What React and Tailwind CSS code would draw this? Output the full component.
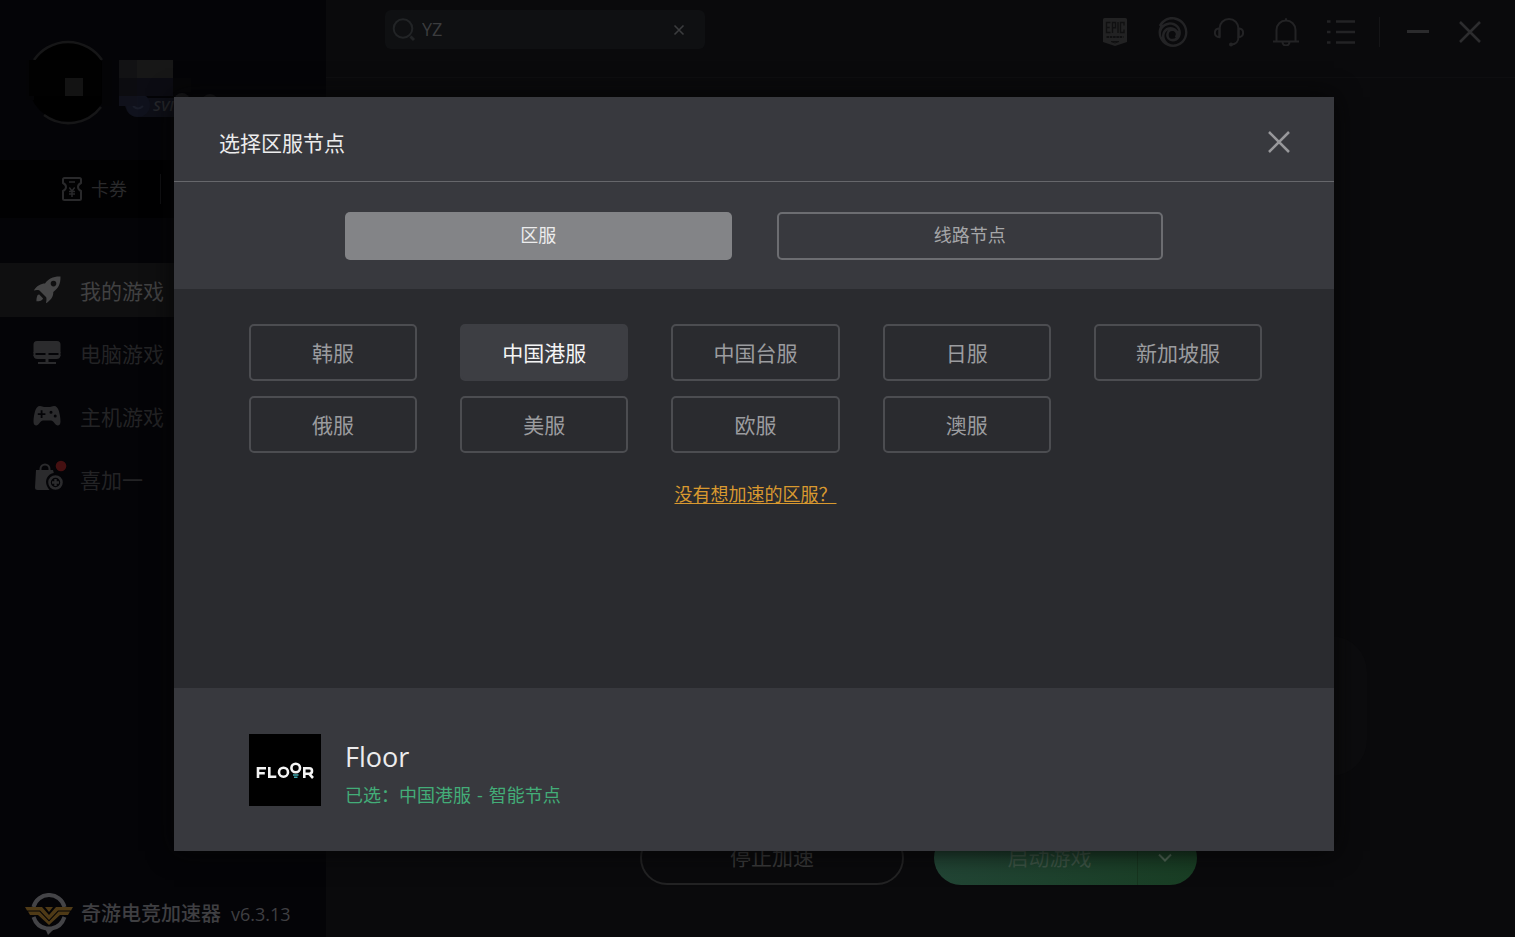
import React, { useState } from "react";
import { SiUbisoft } from "react-icons/si";

const regions = ["韩服", "中国港服", "中国台服", "日服", "新加坡服", "俄服", "美服", "欧服", "澳服"];

function RocketIcon() {
  return (
    <svg viewBox="0 0 28 28" className="h-7 w-7" fill="currentColor" aria-hidden="true">
      <path fillRule="evenodd" d="M27.5.5C20 .3 15.500 2.500 12 7.500 8 7.500 4 9.500.8 14.600c2-.6 4-.7 5.700-.1l6.700 6.700c.5 1.800.3 3.700-.3 6 5.200-3 7.500-7 7.400-11.300C25.300 12.500 27.700 8 27.500.5ZM20.500 4.800a2.800 2.800 0 1 1 0 5.600 2.800 2.800 0 0 1 0-5.600Z" />
      <path d="M6 18.300c-2 .8-2.700 3.700-2.600 7 3.300 0 6-.8 6.700-2.800Z" />
    </svg>
  );
}

function MonitorIcon() {
  return (
    <svg viewBox="0 0 28 24" className="h-6 w-7" fill="currentColor" aria-hidden="true">
      <path d="M4 0h20a3.500 3.500 0 0 1 3.500 3.500V12H.5V3.500A3.500 3.500 0 0 1 4 0ZM.5 14h27a4 4 0 0 1-4 4h-8v3H23v2H5v-2h7.500v-3h-8a4 4 0 0 1-4-4Z" />
      <path d="M.5 11h2v4h-2zM25.500 11h2v4h-2zM12.500 11h3v4h-3z" />
    </svg>
  );
}

function GamepadIcon() {
  return (
    <svg viewBox="0 0 28 20" className="h-5 w-7" fill="currentColor" aria-hidden="true">
      <path fillRule="evenodd" d="M7 0c1.800 0 2.800 1 4 1h6c1.200 0 2.200-1 4-1 2.500 0 4 2 4.900 5 .9 3.200 1.600 7 1.600 10.500 0 2.500-1 4-2.700 4-2.500 0-4.300-5-6.800-5h-8c-2.500 0-4.300 5-6.800 5-1.700 0-2.700-1.500-2.700-4C.5 12 1.200 8.200 2.100 5 3 2 4.500 0 7 0Zm.7 4.200v3H4.800v1.800h2.900v3h1.800v-3h2.900V7.200H9.500v-3ZM18 4.800a1.500 1.500 0 1 0 0 3 1.500 1.500 0 0 0 0-3Zm4.200 3.700a1.500 1.500 0 1 0 0 3 1.500 1.500 0 0 0 0-3Z" />
    </svg>
  );
}

function BagIcon() {
  return (
    <svg viewBox="0 0 34 38" className="h-[38px] w-[34px]" aria-hidden="true">
      <path fill="currentColor" d="M3 10h3.500V9a5.500 5.500 0 0 1 11 0v1H20l.8 3A9 9 0 0 0 14 26l1 2 1.500 2H4.500A2.500 2.500 0 0 1 2 27.500Zm5.500 0h7V9a3.500 3.500 0 0 0-7 0Z" />
      <circle cx="22.500" cy="22.500" r="6" fill="none" stroke="currentColor" strokeWidth="2.600" />
      <path d="M22.500 19v7M19 22.500h7" stroke="currentColor" strokeWidth="2.400" />
      <circle cx="28" cy="6" r="5.300" fill="#451011" />
    </svg>
  );
}

function SearchIcon() {
  return (
    <svg viewBox="0 0 24 24" className="h-6 w-6" fill="none" stroke="#222426" strokeWidth="2" aria-hidden="true">
      <circle cx="11" cy="10.500" r="9.300" />
      <path d="m18.500 18.500 3.500 3.500" strokeWidth="3" />
    </svg>
  );
}

function EpicIcon() {
  return (
    <svg viewBox="0 0 24 28" className="h-7 w-6" aria-hidden="true">
      <path fill="#222223" d="M1.500 0h21A1.500 1.500 0 0 1 24 1.500V24l-12 4L0 24V1.500A1.500 1.500 0 0 1 1.500 0Z" />
      <g stroke="#101011" fill="none" strokeWidth="1.400">
        <path d="M7.500 4.500h-4v10h4M3.500 9.500h3.200M9.500 15V4.500h3v5.200h-3M15 4v11M21 7.500v-3h-3.500v10H21v-3" />
        <path d="M3.500 19h17" strokeDasharray="2.500 .8" strokeWidth="2" />
        <path d="M8 23.500h8l-4 1.500Z" strokeWidth="1" />
      </g>
    </svg>
  );
}

function HeadsetIcon() {
  return (
    <svg viewBox="0 0 30 30" className="h-[30px] w-[30px]" fill="none" stroke="currentColor" strokeWidth="2" aria-hidden="true">
      <path d="M5.500 20V11.500a9.500 9.500 0 0 1 19 0V20c0 4-2.500 7.500-7.500 7.500" />
      <path d="M5.500 11.500C2.500 11.500.9 13.500.9 15.800s1.600 4.400 4.600 4.400ZM24.500 11.500c3 0 4.600 2 4.600 4.300s-1.600 4.400-4.600 4.400Z" />
      <circle cx="17" cy="27.500" r="1" fill="currentColor" />
    </svg>
  );
}

function BellIcon() {
  return (
    <svg viewBox="0 0 28 28" className="h-7 w-7" fill="none" stroke="currentColor" strokeWidth="2" aria-hidden="true">
      <path d="M1 23.500h26M4.500 23V12a9.500 9.500 0 0 1 19 0v11M14 2.500V.3M10.500 24a3.500 3.500 0 0 0 7 0" />
    </svg>
  );
}

function ListIcon() {
  return (
    <svg viewBox="0 0 28 26" className="h-[26px] w-7" stroke="currentColor" strokeWidth="2.400" aria-hidden="true">
      <path d="M0 2.500h3.500M9 2.500h19M0 13h3.500M9 13h19M0 23.500h3.500M9 23.500h19" />
    </svg>
  );
}

function CouponIcon() {
  return (
    <svg viewBox="0 0 20 24" className="h-6 w-5" fill="none" stroke="currentColor" strokeWidth="2" aria-hidden="true">
      <path d="M2.500 1h15a1.500 1.500 0 0 1 1.500 1.500V6c-2 1-3 2.500-3 4s1 3 3 4v7.500a1.500 1.500 0 0 1-1.500 1.500h-15A1.500 1.500 0 0 1 1 21.500V14c2-1 3-2.500 3-4S3 7 1 6V2.500A1.500 1.500 0 0 1 2.500 1Z" />
      <path d="M7 5h6M7.300 10.500l2.700 3.500 2.700-3.500M10 13.500V20M7 14.500h6M7 17h6" strokeWidth="1.500" />
    </svg>
  );
}

function ProfileArt() {
  return (
    <svg viewBox="0 0 230 90" className="h-[90px] w-[230px]" aria-hidden="true">
      <circle cx="42" cy="44" r="40" fill="#000" />
      <path d="M8 22A41 41 0 0 1 76 22M18 77A41 41 0 0 0 75 69" fill="none" stroke="#161617" strokeWidth="2.500" />
      <path d="M0 22h8v40H0zM76 22h10v46H76z" fill="#040406" />
      <path d="M3 22h72v36H3Z" fill="#010101" />
      <rect x="39" y="40" width="18" height="18" fill="#131313" />
      <path d="M101 60h90v19h-80q-9 0-12-11Z" fill="#0e0f17" />
      <circle cx="112" cy="67" r="12" fill="#10121d" />
      <path d="M107 68q5 5 10 0" stroke="#1a1d29" strokeWidth="2" fill="none" />
      <circle cx="156" cy="63" r="8" fill="#161618" />
      <circle cx="184" cy="65" r="9" fill="#161618" />
      <text x="127" y="73" fontSize="15" fontStyle="italic" fontWeight="600" fontFamily="Open Sans, sans-serif" fill="#26272b">SVIP</text>
      <rect x="93" y="22" width="18" height="18" fill="#121214" />
      <rect x="111" y="22" width="36" height="18" fill="#171717" />
      <rect x="93" y="40" width="18" height="18" fill="#0c0c10" />
      <rect x="111" y="40" width="36" height="18" fill="#0c0c13" />
      <rect x="147" y="40" width="18" height="14" fill="#060608" />
      <rect x="93" y="58" width="18" height="10" fill="#10111b" />
    </svg>
  );
}

function BrandMark() {
  return (
    <svg viewBox="0 0 48 42" className="h-[42px] w-12" aria-hidden="true">
      <g fill="none" stroke="#444447" strokeWidth="4">
        <path d="M8.500 14a16 16 0 0 1 31 0M8.500 24c2 6 6 10.500 13 11.500h5c7-1 11-5.500 13-11.500" />
      </g>
      <path d="M20 35h10l-7 7Z" fill="#444447" />
      <path fill="#4f3a16" d="M0 14h17l7 8 7-8h17l-2 3.500H33L24 27l-9-9.500H2ZM3 18.500h11.500L24 28.500l9.500-10H45L43 22h-8l-11 10-11-10H5ZM20 14h8l-4 5Z" />
    </svg>
  );
}

function FloorCover() {
  return (
    <svg viewBox="0 0 72 72" className="h-[72px] w-[72px] bg-black" role="img" aria-label="Floor">
      <g fill="none" stroke="#f4f4f4" strokeWidth="2.600">
        <path d="M9 44V34.300h8M9 39.300h6.800M20.300 33v9.700h7" />
        <circle cx="34.500" cy="38.200" r="4.500" />
        <circle cx="46.700" cy="34" r="4.300" />
        <path d="M55.300 44v-9.700h5a2.600 2.600 0 0 1 0 5.400h-5M60 39.700l4 4.300" />
      </g>
      <path d="M44 41h5.500M45 43.300h3.500" stroke="#3fa6ad" strokeWidth="1.500" />
    </svg>
  );
}

const navItems = [
  { label: "我的游戏", icon: <RocketIcon />, active: true },
  { label: "电脑游戏", icon: <MonitorIcon /> },
  { label: "主机游戏", icon: <GamepadIcon /> },
  { label: "喜加一", icon: <BagIcon /> },
];

function Sidebar() {
  return (
    <aside className="flex w-[326px] shrink-0 flex-col bg-[#040407]">
      <div className="h-40 pl-[26px] pt-[38px]">
        <ProfileArt />
      </div>
      <div className="flex h-[58px] items-center bg-[#010102] pl-[62px] text-[#29292b]">
        <a href="#coupon" className="flex items-center gap-[9px] text-[18px] leading-6">
          <CouponIcon />
          卡券
        </a>
        <span className="ml-[33px] h-[30px] w-px bg-[#111113]" />
      </div>
      <nav className="mt-[45px] flex flex-col gap-[9px]">
        {navItems.map((item) => (
          <a
            key={item.label}
            href="#games"
            className={
              item.active
                ? "flex h-[54px] items-center gap-[19px] bg-[#0f0f10] pl-[33px] text-[21px] text-[#414142]"
                : "flex h-[54px] items-center gap-[19px] pl-[33px] text-[21px] text-[#232325]"
            }
          >
            <span className={item.active ? "w-7 text-[#464647]" : "w-7 text-[#2b2b2d]"}>{item.icon}</span>
            <span className="pt-1">{item.label}</span>
          </a>
        ))}
      </nav>
      <div className="mt-auto flex items-center gap-2 pb-[2px] pl-[25px] text-[#3f3f42]">
        <BrandMark />
        <span className="text-[20px] font-medium">奇游电竞加速器</span>
        <span className="ml-[2px] text-[18px]">v6.3.13</span>
      </div>
    </aside>
  );
}

function Toolbar() {
  return (
    <header className="flex h-[78px] items-start justify-between border-b border-[#0e0e10] pl-[59px] pr-[34px]">
      <label className="mt-[10px] flex h-[39px] w-80 items-center rounded-md bg-[#0f1012] pl-[7px] pr-[18px]">
        <SearchIcon />
        <input
          type="text"
          aria-label="搜索"
          defaultValue="YZ"
          className="mb-[2px] ml-[6px] min-w-0 flex-1 bg-transparent text-[18px] font-medium leading-6 text-[#3b3c3e] outline-none"
        />
        <button type="button" aria-label="清除" className="p-[2px] text-[#3b3c3e]">
          <svg viewBox="0 0 12 12" className="h-3 w-3" stroke="currentColor" strokeWidth="1.600" aria-hidden="true">
            <path d="m1.500 1.500 9 9M10.500 1.500l-9 9" />
          </svg>
        </button>
      </label>
      <div className="flex h-16 items-center text-[#232325]">
        <button type="button" aria-label="Epic" className="mr-[31px]"><EpicIcon /></button>
        <button type="button" aria-label="Ubisoft" className="mr-[26px]"><SiUbisoft className="h-[30px] w-[30px]" /></button>
        <button type="button" aria-label="客服" className="mr-7"><HeadsetIcon /></button>
        <button type="button" aria-label="通知" className="mr-[27px]"><BellIcon /></button>
        <button type="button" aria-label="菜单" className="mr-6"><ListIcon /></button>
        <span className="mr-[27px] h-[30px] w-px bg-[#151517]" />
        <button type="button" aria-label="最小化" className="mr-[30px]">
          <svg viewBox="0 0 22 22" className="h-[22px] w-[22px]" stroke="#2b2b2d" strokeWidth="3" aria-hidden="true"><path d="M0 10.500h22" /></svg>
        </button>
        <button type="button" aria-label="关闭">
          <svg viewBox="0 0 22 22" className="h-[22px] w-[22px]" stroke="#2d2d2f" strokeWidth="2.500" aria-hidden="true"><path d="m1 1 20 20M21 1 1 21" /></svg>
        </button>
      </div>
    </header>
  );
}

function GamePage() {
  return (
    <main className="flex flex-1 flex-col justify-end pb-[52px]">
      <div className="mx-[148px] h-[140px] rounded-[36px] bg-[#0c0c0e]" />
      <div className="mt-[55px] flex justify-center gap-[30px] pr-1 text-[21px]">
        <button type="button" className="h-[54px] w-[264px] rounded-full border-2 border-[#232324] text-[#3a3a3b]">停止加速</button>
        <div className="flex h-[54px] w-[263px] overflow-hidden rounded-full bg-linear-to-r from-[#224535] to-[#193e24]">
          <button type="button" className="flex-1 border-r border-[#17351f] pl-7 text-[#3d5546]">启动游戏</button>
          <button type="button" aria-label="更多" className="flex w-[59px] items-center pl-5 text-[#526a59]">
            <svg viewBox="0 0 14 10" className="h-[10px] w-[14px]" fill="none" stroke="currentColor" strokeWidth="2" aria-hidden="true"><path d="m1 1.500 6 6 6-6" /></svg>
          </button>
        </div>
      </div>
    </main>
  );
}

function RegionDialog() {
  const [selected, setSelected] = useState("中国港服");
  return (
    <section role="dialog" aria-modal="true" aria-labelledby="dialog-title" className="w-[1160px] max-w-full bg-[#38393e] shadow-[0_0_24px_#050505]">
      <div className="flex h-[85px] items-center justify-between border-b border-[#66676b] pl-[45px] pr-11">
        <h1 id="dialog-title" className="pt-2 text-[21px] leading-8 text-[#ececed]">选择区服节点</h1>
        <button type="button" aria-label="关闭" className="pt-[6px]">
          <svg viewBox="0 0 22 22" className="h-[22px] w-[22px]" stroke="#98989b" strokeWidth="2.500" aria-hidden="true"><path d="m1 1 20 20M21 1 1 21" /></svg>
        </button>
      </div>
      <div role="tablist" className="grid h-[107px] grid-cols-2 items-start gap-[45px] px-[171px] pt-[30px] text-[18px]">
        <button type="button" role="tab" aria-selected="true" className="h-12 rounded-[5px] bg-[#838487] pb-[2px] text-[#ececed]">区服</button>
        <button type="button" role="tab" aria-selected="false" className="h-12 rounded-[5px] border-2 border-[#6c6d71] pb-[2px] text-[#a5a6a8]">线路节点</button>
      </div>
      <div className="h-[399px] bg-[#2a2b2f] pl-[75px] pr-[72px] pt-[35px]">
        <div className="grid grid-cols-5 gap-x-[43px] gap-y-[15px] text-[21px]">
          {regions.map((name) => (
            <button
              key={name}
              type="button"
              aria-pressed={name === selected}
              onClick={() => setSelected(name)}
              className={
                name === selected
                  ? "h-[57px] rounded-[5px] border-2 border-[#3d3e43] bg-[#3d3e43] pt-[3px] text-[#f4f4f5]"
                  : "h-[57px] rounded-[5px] border-2 border-[#4c4d51] pt-[3px] text-[#9b9c9f]"
              }
            >
              {name}
            </button>
          ))}
        </div>
        <p className="mt-[27px] text-center text-[18px] leading-7">
          <a href="#missing" className="text-[#d9992f] underline underline-offset-2">没有想加速的区服？</a>
        </p>
      </div>
      <div className="flex h-[163px] items-center gap-6 pl-[75px]">
        <FloorCover />
        <div className="pt-[10px]">
          <h2 className="text-[27px] leading-9 text-[#ececed]">Floor</h2>
          <p className="mt-1 flex gap-[6px] text-[18px] leading-8 text-[#43ad78]">
            <span>已选：{selected}</span>
            <span>-</span>
            <span>智能节点</span>
          </p>
        </div>
      </div>
    </section>
  );
}

export default function App() {
  return (
    <div lang="zh-CN" className="min-h-screen bg-white pr-3 font-['Open_Sans','Noto_Sans_CJK_SC',sans-serif]">
      <div className="relative flex min-h-screen bg-[#0a0a0c]">
        <Sidebar />
        <div className="flex min-w-0 flex-1 flex-col">
          <Toolbar />
          <GamePage />
        </div>
        <div className="absolute inset-0 flex items-start justify-center pr-[7px] pt-[97px]">
          <RegionDialog />
        </div>
      </div>
    </div>
  );
}
